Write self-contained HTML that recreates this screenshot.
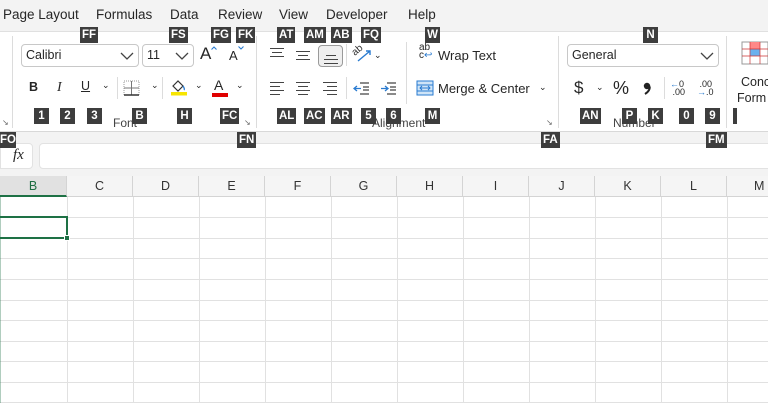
<!DOCTYPE html>
<html><head><meta charset="utf-8"><style>
*{margin:0;padding:0;box-sizing:border-box}
body{width:768px;height:403px;overflow:hidden;background:#f3f3f3;font-family:"Segoe UI","Liberation Sans",sans-serif;color:#252525;position:relative}
.a{position:absolute}
.tab{position:absolute;top:7px;font-size:13.5px;color:#262626}
.k{position:absolute;height:16px;background:#3d3d3d;color:#fff;font-size:11.5px;line-height:16px;text-align:center;padding:0 2px;min-width:15px;font-weight:bold;z-index:5}
.t{position:absolute;font-size:12.5px;color:#262626}
.dd{position:absolute;border:1px solid #c8c8c8;border-radius:4px;background:#fff;font-size:12.5px;padding:3px 0 0 4px;height:23px}
.chev{position:absolute;right:4px;top:4px}
.sep{position:absolute;width:1px;background:#dcdcdc}
.lines span{display:block;height:1.3px;background:#444;margin-bottom:2.7px}
.col{position:absolute;top:176px;height:21px;border-right:1px solid #d4d4d4;font-size:12.5px;text-align:center;line-height:21px;color:#333}
.vl{position:absolute;top:197px;width:1px;height:206px;background:#e1e1e1}
.hl{position:absolute;left:0;width:768px;height:1px;background:#e1e1e1}
</style></head><body>
<div class="tab" style="left:3px">Page Layout</div>
<div class="tab" style="left:96px">Formulas</div>
<div class="tab" style="left:170px">Data</div>
<div class="tab" style="left:218px">Review</div>
<div class="tab" style="left:279px">View</div>
<div class="tab" style="left:326px">Developer</div>
<div class="tab" style="left:408px">Help</div>

<div class="a" style="left:0;top:31px;width:768px;height:101px;background:#fff;border-top:1px solid #e0e0e0;border-bottom:1px solid #d8d8d8"></div>
<div class="sep" style="left:12px;top:36px;height:92px"></div>
<div class="sep" style="left:256px;top:36px;height:92px"></div>
<div class="sep" style="left:558px;top:36px;height:92px"></div>
<div class="sep" style="left:726px;top:36px;height:92px"></div>
<div class="sep" style="left:117px;top:77px;height:22px"></div>
<div class="sep" style="left:162px;top:77px;height:22px"></div>
<div class="sep" style="left:346px;top:44px;height:22px"></div>
<div class="sep" style="left:346px;top:77px;height:22px"></div>
<div class="sep" style="left:406px;top:42px;height:62px"></div>
<div class="sep" style="left:664px;top:77px;height:22px"></div>

<!-- Font group -->
<div class="dd" style="left:21px;top:44px;width:118px">Calibri<svg class="chev" width="14" height="14" viewBox="0 0 14 14"><path d="M1 4l6 6 6-6" fill="none" stroke="#444" stroke-width="1.3"/></svg></div>
<div class="dd" style="left:142px;top:44px;width:52px">11<svg class="chev" width="14" height="14" viewBox="0 0 14 14"><path d="M1 4l6 6 6-6" fill="none" stroke="#444" stroke-width="1.3"/></svg></div>
<div class="t" style="left:200px;top:44px;font-size:17px">A</div>
<svg class="a" style="left:211px;top:46px" width="6" height="4"><path d="M0.5 3.5L3 1l2.5 2.5" fill="none" stroke="#2a7bd0" stroke-width="1.1"/></svg>
<div class="t" style="left:229px;top:48px;font-size:13px">A</div>
<svg class="a" style="left:238px;top:46px" width="6" height="4"><path d="M0.5 0.5L3 3l2.5-2.5" fill="none" stroke="#2a7bd0" stroke-width="1.1"/></svg>
<div class="t" style="left:29px;top:80px;font-weight:bold">B</div>
<div class="t" style="left:57px;top:80px;font-style:italic;font-family:'Liberation Serif',serif;font-size:14px">I</div>
<div class="t" style="left:81px;top:79px;text-decoration:underline">U</div>
<div class="t" style="left:102px;top:80px;font-size:9px">⌄</div>
<svg class="a" style="left:123px;top:80px" width="17" height="16"><rect x="1" y="1" width="15" height="14" fill="none" stroke="#999" stroke-dasharray="1 1"/><path d="M8.5 1v14M1 8h15" stroke="#777"/><path d="M1 15h15" stroke="#333" stroke-width="1.5"/></svg>
<div class="t" style="left:151px;top:80px;font-size:9px">⌄</div>
<svg class="a" style="left:170px;top:78px" width="18" height="18"><path d="M3 8l5-5 5 5-5 5z" fill="none" stroke="#333" stroke-width="1.2"/><path d="M13 8q2 3 1 4" stroke="#2a7bd0" fill="none" stroke-width="1.4"/><rect x="1" y="14" width="16" height="3.5" fill="#f7e500"/></svg>
<div class="t" style="left:195px;top:80px;font-size:9px">⌄</div>
<div class="t" style="left:214px;top:77px;font-size:14px">A</div><div class="a" style="left:212px;top:93px;width:16px;height:3.5px;background:#e00000"></div>
<div class="t" style="left:236px;top:80px;font-size:9px">⌄</div>
<div class="t" style="left:113px;top:116px;font-size:12px;color:#444">Font</div>
<div class="t" style="left:2px;top:118px;font-size:8px;color:#666">↘</div>
<div class="t" style="left:244px;top:118px;font-size:8px;color:#666">↘</div>

<!-- Alignment -->
<div class="a lines" style="left:270px;top:48px;width:14px"><span></span><span style="width:10px;margin-left:2px"></span><span style="width:14px"></span></div>
<div class="a lines" style="left:296px;top:51px;width:14px"><span></span><span style="width:10px;margin-left:2px"></span><span></span></div>
<div class="a" style="left:318px;top:45px;width:25px;height:22px;border:1px solid #9a9a9a;border-radius:4px;background:#efefef"></div>
<div class="a lines" style="left:324px;top:55px;width:14px"><span style="width:10px;margin-left:2px"></span><span></span><span></span></div>
<div class="t" style="left:352px;top:45px;font-size:10px;transform:rotate(-40deg);color:#333">ab</div>
<svg class="a" style="left:356px;top:48px" width="18" height="16"><path d="M2 13L14 3M10 3h4v4" stroke="#2a7bd0" fill="none" stroke-width="1.4"/></svg>
<div class="t" style="left:374px;top:50px;font-size:9px">⌄</div>
<div class="a lines" style="left:270px;top:82px;width:14px"><span></span><span style="width:10px"></span><span></span><span style="width:10px"></span></div>
<div class="a lines" style="left:296px;top:82px;width:14px"><span></span><span style="width:10px;margin-left:2px"></span><span></span><span style="width:10px;margin-left:2px"></span></div>
<div class="a lines" style="left:323px;top:82px;width:14px"><span></span><span style="width:10px;margin-left:4px"></span><span></span><span style="width:10px;margin-left:4px"></span></div>
<svg class="a" style="left:353px;top:81px" width="16" height="14"><path d="M7 2h9M10 6h6M10 9h6M7 13h9" stroke="#444" stroke-width="1.2"/><path d="M8 7.5H1M4 5L1 7.5 4 10" stroke="#2a7bd0" fill="none" stroke-width="1.3"/></svg>
<svg class="a" style="left:380px;top:81px" width="16" height="14"><path d="M7 2h9M10 6h6M10 9h6M7 13h9" stroke="#444" stroke-width="1.2"/><path d="M1 7.5h7M5 5l3 2.5L5 10" stroke="#2a7bd0" fill="none" stroke-width="1.3"/></svg>
<div class="t" style="left:419px;top:44px;font-size:10px;line-height:8px">ab<br>c<span style="color:#2a7bd0">↩</span></div>
<div class="t" style="left:438px;top:48px;font-size:13px">Wrap Text</div>
<svg class="a" style="left:416px;top:80px" width="18" height="16"><rect x="1" y="1" width="16" height="14" fill="#cfe4f7" stroke="#2a7bd0"/><path d="M1 5h16M1 11h16M4 8h10M6 6l-2 2 2 2M12 6l2 2-2 2" stroke="#2a7bd0" fill="none"/></svg>
<div class="t" style="left:438px;top:81px;font-size:13px">Merge &amp; Center</div>
<div class="t" style="left:539px;top:82px;font-size:9px">⌄</div>
<div class="t" style="left:372px;top:116px;font-size:12px;color:#444">Alignment</div>
<div class="t" style="left:546px;top:118px;font-size:8px;color:#666">↘</div>

<!-- Number -->
<div class="dd" style="left:567px;top:44px;width:152px">General<svg class="chev" width="14" height="14" viewBox="0 0 14 14"><path d="M1 4l6 6 6-6" fill="none" stroke="#444" stroke-width="1.3"/></svg></div>
<div class="t" style="left:574px;top:78px;font-size:17px">$</div>
<div class="t" style="left:596px;top:82px;font-size:9px">⌄</div>
<div class="t" style="left:613px;top:78px;font-size:18px">%</div>
<svg class="a" style="left:642px;top:80px" width="10" height="16"><circle cx="5" cy="6" r="3.2" fill="#222"/><path d="M7.8 6.5Q8 11 3 14" stroke="#222" stroke-width="2" fill="none"/></svg>
<div class="t" style="left:670px;top:80px;font-size:9px;line-height:8px"><span style="color:#2a7bd0">←</span>0<br>&nbsp;.00</div>
<div class="t" style="left:697px;top:80px;font-size:9px;line-height:8px">&nbsp;.00<br><span style="color:#2a7bd0">→</span>.0</div>
<div class="t" style="left:613px;top:116px;font-size:12px;color:#444">Number</div>
<svg class="a" style="left:740px;top:40px" width="28" height="26"><rect x="2" y="2" width="26" height="22" fill="#fff" stroke="#999"/><rect x="10" y="2" width="10" height="7" fill="#f88"/><rect x="10" y="9" width="10" height="7" fill="#6ab0ee"/><path d="M2 9h26M2 16h26M10 2v22M20 2v22" stroke="#c33" stroke-width=".7"/></svg>
<div class="t" style="left:741px;top:75px;font-size:12.5px">Conc</div>
<div class="t" style="left:737px;top:91px;font-size:12.5px">Form</div>

<!-- keytips -->
<div class="k" style="left:80px;top:27px">FF</div>
<div class="k" style="left:169px;top:27px">FS</div>
<div class="k" style="left:211px;top:27px">FG</div>
<div class="k" style="left:236px;top:27px">FK</div>
<div class="k" style="left:277px;top:27px">AT</div>
<div class="k" style="left:304px;top:27px">AM</div>
<div class="k" style="left:331px;top:27px">AB</div>
<div class="k" style="left:361px;top:27px">FQ</div>
<div class="k" style="left:425px;top:27px">W</div>
<div class="k" style="left:643px;top:27px">N</div>
<div class="k" style="left:34px;top:108px">1</div>
<div class="k" style="left:60px;top:108px">2</div>
<div class="k" style="left:87px;top:108px">3</div>
<div class="k" style="left:132px;top:108px">B</div>
<div class="k" style="left:177px;top:108px">H</div>
<div class="k" style="left:220px;top:108px">FC</div>
<div class="k" style="left:277px;top:108px">AL</div>
<div class="k" style="left:304px;top:108px">AC</div>
<div class="k" style="left:331px;top:108px">AR</div>
<div class="k" style="left:361px;top:108px">5</div>
<div class="k" style="left:386px;top:108px">6</div>
<div class="k" style="left:425px;top:108px">M</div>
<div class="k" style="left:580px;top:108px">AN</div>
<div class="k" style="left:622px;top:108px">P</div>
<div class="k" style="left:648px;top:108px">K</div>
<div class="k" style="left:679px;top:108px">0</div>
<div class="k" style="left:705px;top:108px">9</div>
<div class="k" style="left:733px;top:108px;min-width:4px;width:4px;padding:0"></div>
<div class="k" style="left:0px;top:132px;min-width:14px;padding:0">FO</div>
<div class="k" style="left:237px;top:132px">FN</div>
<div class="k" style="left:541px;top:132px">FA</div>
<div class="k" style="left:706px;top:132px">FM</div>

<!-- formula bar -->
<div class="a" style="left:0;top:143px;width:33px;height:26px;background:#fff;border-radius:0 4px 4px 0;border:1px solid #e2e2e2;font-family:'Liberation Serif',serif;font-style:italic;font-size:15px;padding:3px 0 0 12px">fx</div>
<div class="a" style="left:39px;top:143px;width:740px;height:26px;background:#fff;border-radius:4px;border:1px solid #e2e2e2"></div>

<!-- grid -->
<div class="a" style="left:0;top:176px;width:768px;height:21px;background:#f5f5f5;border-bottom:1px solid #d4d4d4"></div>
<div class="col" style="left:0;width:67px;background:#e1e1e1;color:#1e6e42;border-bottom:2px solid #1e7145;height:21px">B</div>
<div class="col" style="left:67px;width:66px">C</div>
<div class="col" style="left:133px;width:66px">D</div>
<div class="col" style="left:199px;width:66px">E</div>
<div class="col" style="left:265px;width:66px">F</div>
<div class="col" style="left:331px;width:66px">G</div>
<div class="col" style="left:397px;width:66px">H</div>
<div class="col" style="left:463px;width:66px">I</div>
<div class="col" style="left:529px;width:66px">J</div>
<div class="col" style="left:595px;width:66px">K</div>
<div class="col" style="left:661px;width:66px">L</div>
<div class="col" style="left:727px;width:66px;text-align:left;padding-left:27px">M</div>
<div class="a" style="left:0;top:197px;width:768px;height:206px;background:#fff"></div>
<div class="vl" style="left:67px"></div><div class="vl" style="left:133px"></div><div class="vl" style="left:199px"></div><div class="vl" style="left:265px"></div><div class="vl" style="left:331px"></div><div class="vl" style="left:397px"></div><div class="vl" style="left:463px"></div><div class="vl" style="left:529px"></div><div class="vl" style="left:595px"></div><div class="vl" style="left:661px"></div><div class="vl" style="left:727px"></div>
<div class="hl" style="top:217px"></div><div class="hl" style="top:238px"></div><div class="hl" style="top:258px"></div><div class="hl" style="top:279px"></div><div class="hl" style="top:300px"></div><div class="hl" style="top:320px"></div><div class="hl" style="top:341px"></div><div class="hl" style="top:361px"></div><div class="hl" style="top:382px"></div><div class="hl" style="top:402px"></div>
<div class="a" style="left:0;top:197px;width:1px;height:206px;background:#1e7145;opacity:.35"></div>
<div class="a" style="left:-2px;top:216px;width:70px;height:23px;border:2px solid #1e7145"></div>
<div class="a" style="left:64px;top:235px;width:6px;height:6px;background:#1e7145;border:1px solid #fff"></div>
</body></html>
